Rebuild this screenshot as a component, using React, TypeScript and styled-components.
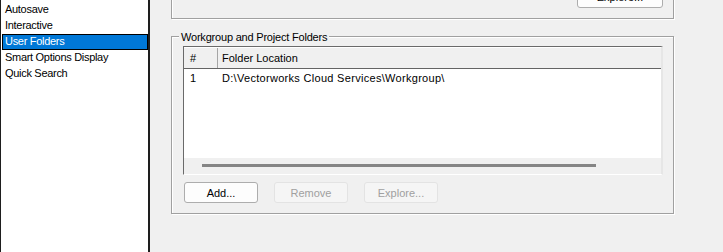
import React from "react";
import styled, { createGlobalStyle } from "styled-components";

const GlobalStyle = createGlobalStyle`
  html, body {
    margin: 0;
    padding: 0;
    background: #f0f0f0;
  }
  body {
    font-family: "Liberation Sans", Arial, sans-serif;
    font-size: 11px;
    color: #000;
  }
  * { box-sizing: border-box; }
`;

const Window = styled.div`
  display: flex;
  width: 723px;
  height: 252px;
  overflow: hidden;
  background: #f0f0f0;
`;

const CategoryList = styled.ul`
  list-style: none;
  margin: 0;
  padding: 2px 0 0 0;
  width: 150px;
  height: 100%;
  flex: none;
  background: #fff;
  border-left: 1px solid #1e1e1e;
  border-right: 2px solid #1e1e1e;
`;

const CategoryItem = styled.li<{ $selected?: boolean }>`
  height: 16px;
  margin-left: 1px;
  padding-left: 2px;
  line-height: 13px;
  letter-spacing: -0.3px;
  white-space: nowrap;
  border: 1px solid ${(p) => (p.$selected ? "#000" : "transparent")};
  background: ${(p) => (p.$selected ? "#0078d7" : "transparent")};
  color: ${(p) => (p.$selected ? "#fff" : "#000")};
`;

const Pane = styled.div`
  flex: 1;
  display: flex;
  flex-direction: column;
  padding: 0 49px 0 21px;
  overflow: hidden;
`;

const GroupBox = styled.div`
  position: relative;
  border: 1px solid #a0a0a0;
  box-shadow: 1px 1px 0 #fff, inset 1px 1px 0 #fff;
`;

const TopGroup = styled(GroupBox)`
  margin-top: -30px;
  height: 49px;
  flex: none;
  display: flex;
  justify-content: flex-end;
  align-items: flex-end;
  padding: 0 10px 10px 0;
`;

const FoldersGroup = styled(GroupBox)`
  margin-top: 17px;
  height: 178px;
  flex: none;
  padding: 9px 10px 10px 11px;
  display: flex;
  flex-direction: column;
`;

const GroupLabel = styled.span`
  position: absolute;
  top: -6px;
  left: 7px;
  padding: 0 2px;
  line-height: 13px;
  letter-spacing: -0.2px;
  background: #f0f0f0;
  white-space: nowrap;
`;

const ListView = styled.div`
  width: 480px;
  height: 129px;
  display: flex;
  flex-direction: column;
  background: #fff;
  border-style: solid;
  border-width: 1px 2px 1px 1px;
  border-color: #6a6a6a #e6e6e6 #fff #6a6a6a;
  box-shadow: inset -1px 0 0 #fff;
`;

const HeaderRow = styled.div`
  display: flex;
  height: 22px;
  flex: none;
  background: #f0f0f0;
  border-top: 1px solid #fff;
  border-bottom: 1px solid #646464;
`;

const DataRow = styled.div`
  display: flex;
  height: 18px;
  flex: none;
`;

const Cell = styled.div<{ $width?: number; $sep?: boolean; $spacing?: number }>`
  display: flex;
  align-items: center;
  white-space: nowrap;
  flex: ${(p) => (p.$width ? "none" : "1")};
  width: ${(p) => (p.$width ? `${p.$width}px` : "auto")};
  padding-left: ${(p) => (p.$width ? "6px" : "4px")};
  letter-spacing: ${(p) => p.$spacing ?? 0}px;
  border-right: ${(p) => (p.$sep ? "1px solid #a5a5a5" : "none")};
`;

const Body = styled.div`
  flex: 1;
  display: flex;
  flex-direction: column;
`;

const ScrollBar = styled.div`
  height: 16px;
  flex: none;
  background: #f0f0f0;
  padding: 6px 0 0 18px;
`;

const Thumb = styled.div`
  width: 394px;
  height: 3px;
  background: #858585;
`;

const ButtonRow = styled.div`
  display: flex;
  gap: 16px;
  margin: 7px 0 0 1px;
`;

const Button = styled.button<{ $width?: number; $height?: number }>`
  width: ${(p) => p.$width ?? 74}px;
  height: ${(p) => p.$height ?? 21}px;
  padding: 0;
  font-family: "Liberation Sans", Arial, sans-serif;
  font-size: 11px;
  color: #000;
  background: #fdfdfd;
  border: 1px solid #adadad;
  border-radius: 3px;
  flex: none;
  &:disabled {
    color: #a0a0a0;
    background: #f5f5f5;
    border-color: #e3e3e3;
  }
`;

const categories = [
  "Autosave",
  "Interactive",
  "User Folders",
  "Smart Options Display",
  "Quick Search",
];

export default function App() {
  return (
    <>
      <GlobalStyle />
      <Window>
        <CategoryList>
          {categories.map((c) => (
            <CategoryItem key={c} $selected={c === "User Folders"}>
              {c}
            </CategoryItem>
          ))}
        </CategoryList>
        <Pane>
          <TopGroup>
            <Button $width={86} $height={23}>
              Explore...
            </Button>
          </TopGroup>
          <FoldersGroup>
            <GroupLabel>Workgroup and Project Folders</GroupLabel>
            <ListView>
              <HeaderRow>
                <Cell $width={34} $sep>
                  #
                </Cell>
                <Cell>Folder Location</Cell>
              </HeaderRow>
              <Body>
                <DataRow>
                  <Cell $width={34}>1</Cell>
                  <Cell $spacing={0.3}>D:\Vectorworks Cloud Services\Workgroup\</Cell>
                </DataRow>
              </Body>
              <ScrollBar>
                <Thumb />
              </ScrollBar>
            </ListView>
            <ButtonRow>
              <Button>Add...</Button>
              <Button disabled>Remove</Button>
              <Button disabled>Explore...</Button>
            </ButtonRow>
          </FoldersGroup>
        </Pane>
      </Window>
    </>
  );
}
